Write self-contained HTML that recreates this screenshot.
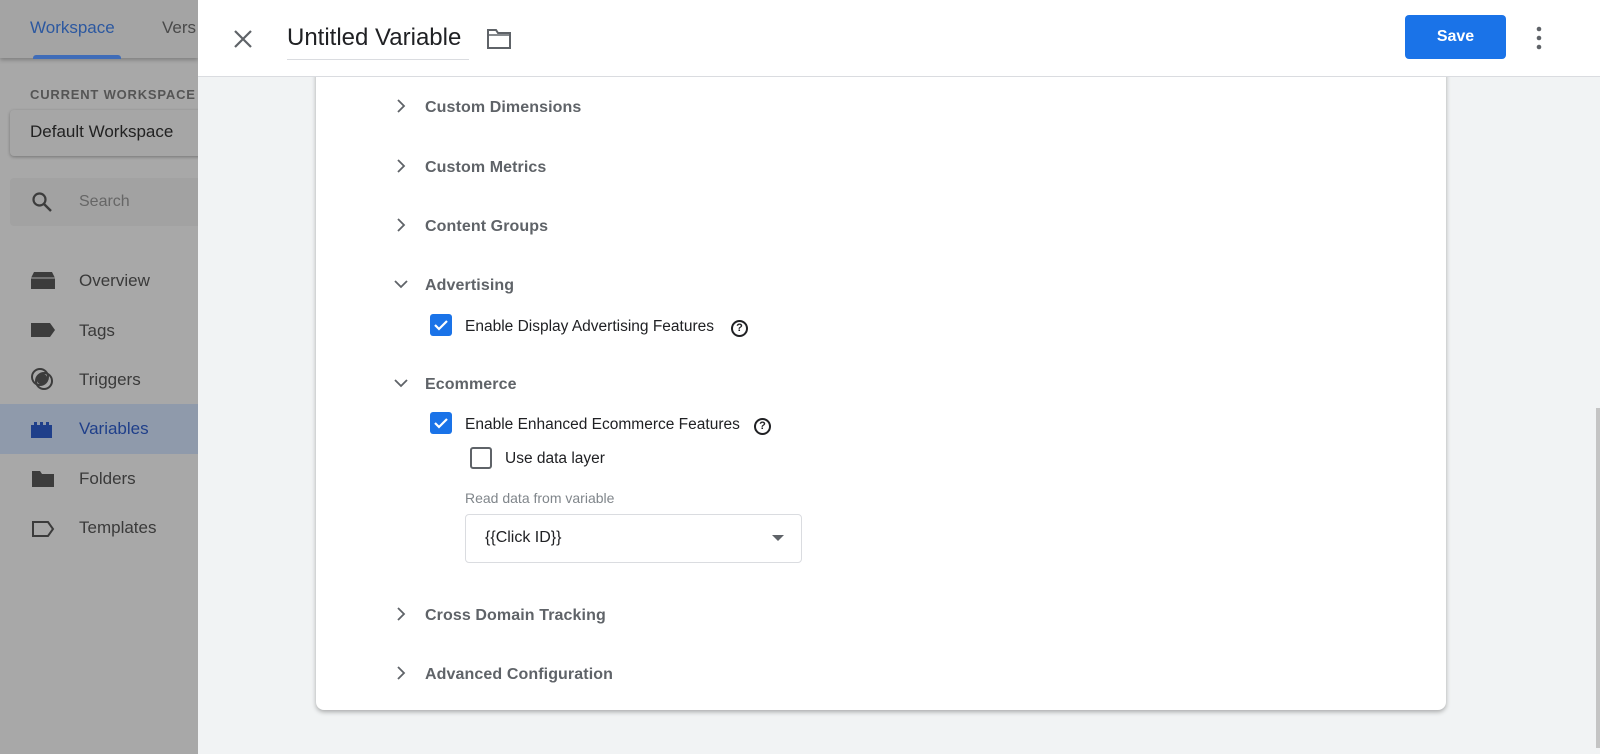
<!DOCTYPE html>
<html><head><style>
*{margin:0;padding:0;box-sizing:border-box}
body{width:1600px;height:754px;overflow:hidden;position:relative;font-family:"Liberation Sans",Arial,sans-serif;background:#a9a9a9;white-space:nowrap}
.sb{position:absolute;left:0;top:0;width:198px;height:754px;background:#a8a8a8;overflow:hidden}
.sbtop{position:absolute;left:0;top:0;width:198px;height:58px;background:#a4a4a4;box-shadow:0 2px 4px rgba(0,0,0,.25)}
.tab{position:absolute;top:18px;font-size:17px}
.nav{position:absolute;left:79px;font-size:17px;color:#3a3a3a}
.ic{position:absolute;left:30px}
.panel{position:absolute;left:198px;top:0;width:1402px;height:754px;background:#f1f3f4}
.hdr{position:absolute;left:0;top:0;width:1402px;height:77px;background:#fff;border-bottom:1px solid #dadce0;z-index:2}
.card{position:absolute;left:118px;top:40px;width:1130px;height:670px;background:#fff;border-radius:8px;box-shadow:0 2px 5px rgba(0,0,0,.3)}
.wrap{position:absolute;left:0;top:0;width:1600px;height:754px}
.sec{position:absolute;left:425px;font-size:16px;color:#5f6368;font-weight:bold;letter-spacing:.1px}
.chev{position:absolute;left:396px}
.lbl{position:absolute;font-size:15.5px;color:#202124}
.cb{position:absolute;width:22px;height:22px;border-radius:3px;background:#1a73e8}
.q{position:absolute;width:17px;height:17px;border:2px solid #202124;border-radius:50%;font-size:11px;font-weight:bold;text-align:center;line-height:13px;color:#202124}
</style></head><body>
<div class="sb">
<div class="sbtop"></div>
<div class="tab" style="left:30px;color:#2c58a0">Workspace</div>
<div class="tab" style="left:162px;color:#4a4a4a">Vers</div>
<div style="position:absolute;left:33px;top:55px;width:88px;height:4px;background:#3f6cb8;border-radius:3px 3px 0 0"></div>
<div style="position:absolute;left:30px;top:87px;font-size:13px;color:#555;letter-spacing:.8px;font-weight:bold">CURRENT WORKSPACE</div>
<div style="position:absolute;left:10px;top:110px;width:200px;height:46px;background:#a6a6a6;border-radius:4px;box-shadow:0 1px 3px rgba(0,0,0,.3)"></div>
<div style="position:absolute;left:30px;top:122px;font-size:17px;color:#222">Default Workspace</div>
<div style="position:absolute;left:10px;top:178px;width:200px;height:48px;background:#a2a2a2;border-radius:4px"></div>
<svg style="position:absolute;left:30px;top:190px" width="24" height="24" viewBox="0 0 24 24"><circle cx="9.5" cy="9.5" r="6" fill="none" stroke="#3c3c3c" stroke-width="2.2"/><path d="M14 14l7 7" stroke="#3c3c3c" stroke-width="2.4"/></svg>
<div style="position:absolute;left:79px;top:193px;font-size:16px;color:#666">Search</div>
<svg class="ic" style="top:270px" width="26" height="20"><path d="M4 2h18l3 6v11H1V8z" fill="#3c3c3c"/><path d="M1 8h24" stroke="#a8a8a8" stroke-width="1"/></svg>
<div class="nav" style="top:271px">Overview</div>
<svg class="ic" style="top:322px" width="26" height="16"><path d="M1 1h19l5 7-5 7H1z" fill="#3c3c3c"/></svg>
<div class="nav" style="top:321px">Tags</div>
<svg class="ic" style="top:367px" width="26" height="26"><circle cx="10" cy="10" r="8" fill="none" stroke="#3c3c3c" stroke-width="2"/><circle cx="14" cy="14" r="8" fill="none" stroke="#3c3c3c" stroke-width="2"/><circle cx="12" cy="12" r="5.5" fill="#3c3c3c"/></svg>
<div class="nav" style="top:370px">Triggers</div>
<div style="position:absolute;left:0;top:404px;width:198px;height:50px;background:#8f9aab"></div>
<svg class="ic" style="top:421px" width="26" height="18"><path d="M1 4h3V1h3v3h3V1h3v3h3V1h3v3h3v13H1z" fill="#1f3f8a"/></svg>
<div class="nav" style="top:419px;color:#1f3f8a">Variables</div>
<svg class="ic" style="top:469px" width="26" height="20"><path d="M2 2h8l2 3h12v13H2z" fill="#3c3c3c"/></svg>
<div class="nav" style="top:469px">Folders</div>
<svg class="ic" style="top:520px" width="26" height="18"><path d="M3 2h15l5 7-5 7H3z" fill="none" stroke="#3c3c3c" stroke-width="2"/></svg>
<div class="nav" style="top:518px">Templates</div>
</div>
<div class="panel">
<div class="hdr">
<svg style="position:absolute;left:35px;top:29px" width="20" height="20"><path d="M2 2l16 16M18 2L2 18" stroke="#5f6368" stroke-width="2.2"/></svg>
<div style="position:absolute;left:89px;top:24px;font-size:24px;color:#202124">Untitled Variable</div>
<div style="position:absolute;left:89px;top:59px;width:182px;height:1px;background:#dadce0"></div>
<svg style="position:absolute;left:288px;top:28px" width="26" height="22"><path d="M2 2h8l2 3h12v15H2z" fill="none" stroke="#5f6368" stroke-width="2"/><path d="M2 7h22" stroke="#5f6368" stroke-width="1.5"/></svg>
<div style="position:absolute;left:1207px;top:15px;width:101px;height:44px;background:#1a73e8;border-radius:4px;color:#fff;font-weight:bold;font-size:16px;text-align:center;line-height:44px">Save</div>
<svg style="position:absolute;left:1336px;top:26px" width="10" height="24"><circle cx="5" cy="3" r="2.3" fill="#5f6368"/><circle cx="5" cy="12" r="2.3" fill="#5f6368"/><circle cx="5" cy="21" r="2.3" fill="#5f6368"/></svg>
</div>
<div class="card"></div>
<div style="position:absolute;left:1398px;top:408px;width:4px;height:340px;background:#c4c4c4"></div>
</div>
<div class="wrap">
<svg class="chev" style="top:99px" width="10" height="14"><path d="M2 1l6 6-6 6" fill="none" stroke="#5f6368" stroke-width="1.8"/></svg>
<div class="sec" style="top:99px">Custom Dimensions</div>
<svg class="chev" style="top:159px" width="10" height="14"><path d="M2 1l6 6-6 6" fill="none" stroke="#5f6368" stroke-width="1.8"/></svg>
<div class="sec" style="top:159px">Custom Metrics</div>
<svg class="chev" style="top:218px" width="10" height="14"><path d="M2 1l6 6-6 6" fill="none" stroke="#5f6368" stroke-width="1.8"/></svg>
<div class="sec" style="top:218px">Content Groups</div>
<svg style="position:absolute;top:279px;left:394px" width="14" height="10"><path d="M1 2l6 6 6-6" fill="none" stroke="#5f6368" stroke-width="1.8"/></svg>
<div class="sec" style="top:277px">Advertising</div>
<div class="cb" style="left:430px;top:314px"><svg width="22" height="22"><path d="M5 11l4 4 8-8" fill="none" stroke="#fff" stroke-width="2.2"/></svg></div>
<div class="lbl" style="left:465px;top:318px">Enable Display Advertising Features</div>
<div class="q" style="left:731px;top:320px">?</div>
<svg style="position:absolute;top:378px;left:394px" width="14" height="10"><path d="M1 2l6 6 6-6" fill="none" stroke="#5f6368" stroke-width="1.8"/></svg>
<div class="sec" style="top:376px">Ecommerce</div>
<div class="cb" style="left:430px;top:412px"><svg width="22" height="22"><path d="M5 11l4 4 8-8" fill="none" stroke="#fff" stroke-width="2.2"/></svg></div>
<div class="lbl" style="left:465px;top:416px">Enable Enhanced Ecommerce Features</div>
<div class="q" style="left:754px;top:418px">?</div>
<div style="position:absolute;left:470px;top:447px;width:22px;height:22px;border:2px solid #5f6368;border-radius:3px"></div>
<div class="lbl" style="left:505px;top:450px">Use data layer</div>
<div style="position:absolute;left:465px;top:490px;font-size:14px;color:#80868b">Read data from variable</div>
<div style="position:absolute;left:465px;top:514px;width:337px;height:49px;border:1px solid #dadce0;border-radius:4px"></div>
<div class="lbl" style="left:485px;top:529px;font-size:16px">{{Click ID}}</div>
<svg style="position:absolute;left:772px;top:535px" width="12" height="7"><path d="M0 0h12L6 6z" fill="#5f6368"/></svg>
<svg class="chev" style="top:607px" width="10" height="14"><path d="M2 1l6 6-6 6" fill="none" stroke="#5f6368" stroke-width="1.8"/></svg>
<div class="sec" style="top:607px">Cross Domain Tracking</div>
<svg class="chev" style="top:666px" width="10" height="14"><path d="M2 1l6 6-6 6" fill="none" stroke="#5f6368" stroke-width="1.8"/></svg>
<div class="sec" style="top:666px">Advanced Configuration</div>
</div>
</body></html>
